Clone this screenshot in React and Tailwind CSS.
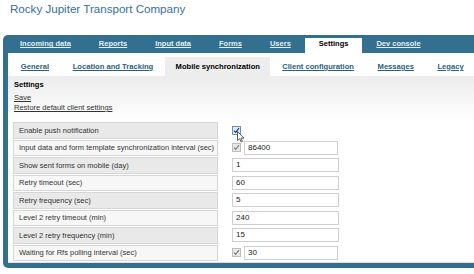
import React from 'react';

const topTabs = ['Incoming data', 'Reports', 'Input data', 'Forms', 'Users', 'Settings', 'Dev console'];
const subTabs = ['General', 'Location and Tracking', 'Mobile synchronization', 'Client configuration', 'Messages', 'Legacy'];

const rows = [
  { label: 'Enable push notification', check: true, focus: true },
  { label: 'Input data and form template synchronization interval (sec)', check: true, value: '86400' },
  { label: 'Show sent forms on mobile (day)', value: '1' },
  { label: 'Retry timeout (sec)', value: '60' },
  { label: 'Retry frequency (sec)', value: '5' },
  { label: 'Level 2 retry timeout (min)', value: '240' },
  { label: 'Level 2 retry frequency (min)', value: '15' },
  { label: 'Waiting for Rfs polling interval (sec)', check: true, value: '30' },
];

const Check = ({ focus }) => (
  <span
    className={
      'flex items-center justify-center w-[9px] h-[9px] border ' +
      (focus ? 'border-[#6c8fbf] bg-[#dfe8f5]' : 'border-[#bdbdbd] bg-[#e8e8e8]')
    }
  >
    <svg width="7" height="7" viewBox="0 0 7 7">
      <path d="M1 3.6 L2.7 5.4 L6 1.2" fill="none" stroke={focus ? '#1d3d78' : '#7a7a7a'} strokeWidth="1.1" />
    </svg>
  </span>
);

const App = () => {
  return (
    <div className="relative w-[474px] h-[274px] overflow-hidden bg-white font-['Liberation_Sans',Arial,sans-serif]">
      <h1 className="pl-[10px] pt-[1px] h-[35px] text-[11.6px] leading-[15px] text-[#36709a]">
        Rocky Jupiter Transport Company
      </h1>

      <div className="ml-[3px] w-[490px] bg-[#33708f] rounded-l-[5px] pl-[5px] pb-[5px]">
        {/* top navigation */}
        <nav className="flex h-[18px] items-end -ml-[2px]">
          {topTabs.map((t) =>
            t === 'Settings' ? (
              <span
                key={t}
                className="flex items-center h-[15px] px-[14px] bg-white text-black font-bold text-[7.5px] pb-[3px]"
              >
                {t}
              </span>
            ) : (
              <a
                key={t}
                className="flex items-center h-[15px] px-[14px] text-[#e4eef5] font-bold text-[7.5px] underline pb-[3px]"
              >
                {t}
              </a>
            )
          )}
        </nav>

        <div className="bg-white border-b border-[#f2d9de]">
          {/* sub navigation */}
          <nav className="flex h-[23px] items-end pl-[1px]">
            {subTabs.map((t) =>
              t === 'Mobile synchronization' ? (
                <span
                  key={t}
                  className="flex items-center h-[19px] px-[10.5px] bg-[#ededed] text-black font-bold text-[7.6px]"
                >
                  {t}
                </span>
              ) : (
                <a
                  key={t}
                  className="flex items-center h-[19px] px-[11.8px] text-[#2b5f80] font-bold text-[7.6px] underline"
                >
                  {t}
                </a>
              )
            )}
          </nav>

          {/* content */}
          <div className="bg-linear-to-b from-[#ececec] to-white h-[46px] pl-[6px] pt-[4px] text-[7.5px] text-[#333] leading-[10px]">
            <div className="font-bold text-black">Settings</div>
            <div className="mt-[3px] underline">Save</div>
            <div className="underline">Restore default client settings</div>
          </div>

          <div className="flex flex-col gap-[1px] pl-[5px] pb-[1px]">
            {rows.map((r, i) => (
              <div key={r.label} className="flex items-center h-[16.5px]">
                <div
                  className={
                    'flex items-center w-[205px] h-full border border-[#d6d6d6] pl-[5px] text-[7.5px] text-[#333] ' +
                    (i % 2 === 0 ? 'bg-[#e9e9e9]' : 'bg-[#f7f7f7]')
                  }
                >
                  {r.label}
                </div>
                <div className="flex items-center gap-[3px] ml-[14px]">
                  {r.check && <Check focus={r.focus} />}
                  {r.value !== undefined && (
                    <div
                      className={
                        'flex items-center h-[14px] border border-[#cfcfcf] bg-white pl-[3px] text-[8px] text-[#222] ' +
                        (r.check ? 'w-[94px]' : 'w-[107px]')
                      }
                    >
                      {r.value}
                    </div>
                  )}
                </div>
              </div>
            ))}
          </div>
        </div>
      </div>

      {/* mouse pointer */}
      <svg className="absolute left-[237px] top-[131px]" width="8" height="12" viewBox="0 0 8 12">
        <path d="M0.5 0.5 L0.5 9.5 L2.6 7.6 L4.1 11 L5.4 10.4 L4 7.1 L7 7.1 Z" fill="white" stroke="#333" strokeWidth="0.8" />
      </svg>
    </div>
  );
};

export default App;
